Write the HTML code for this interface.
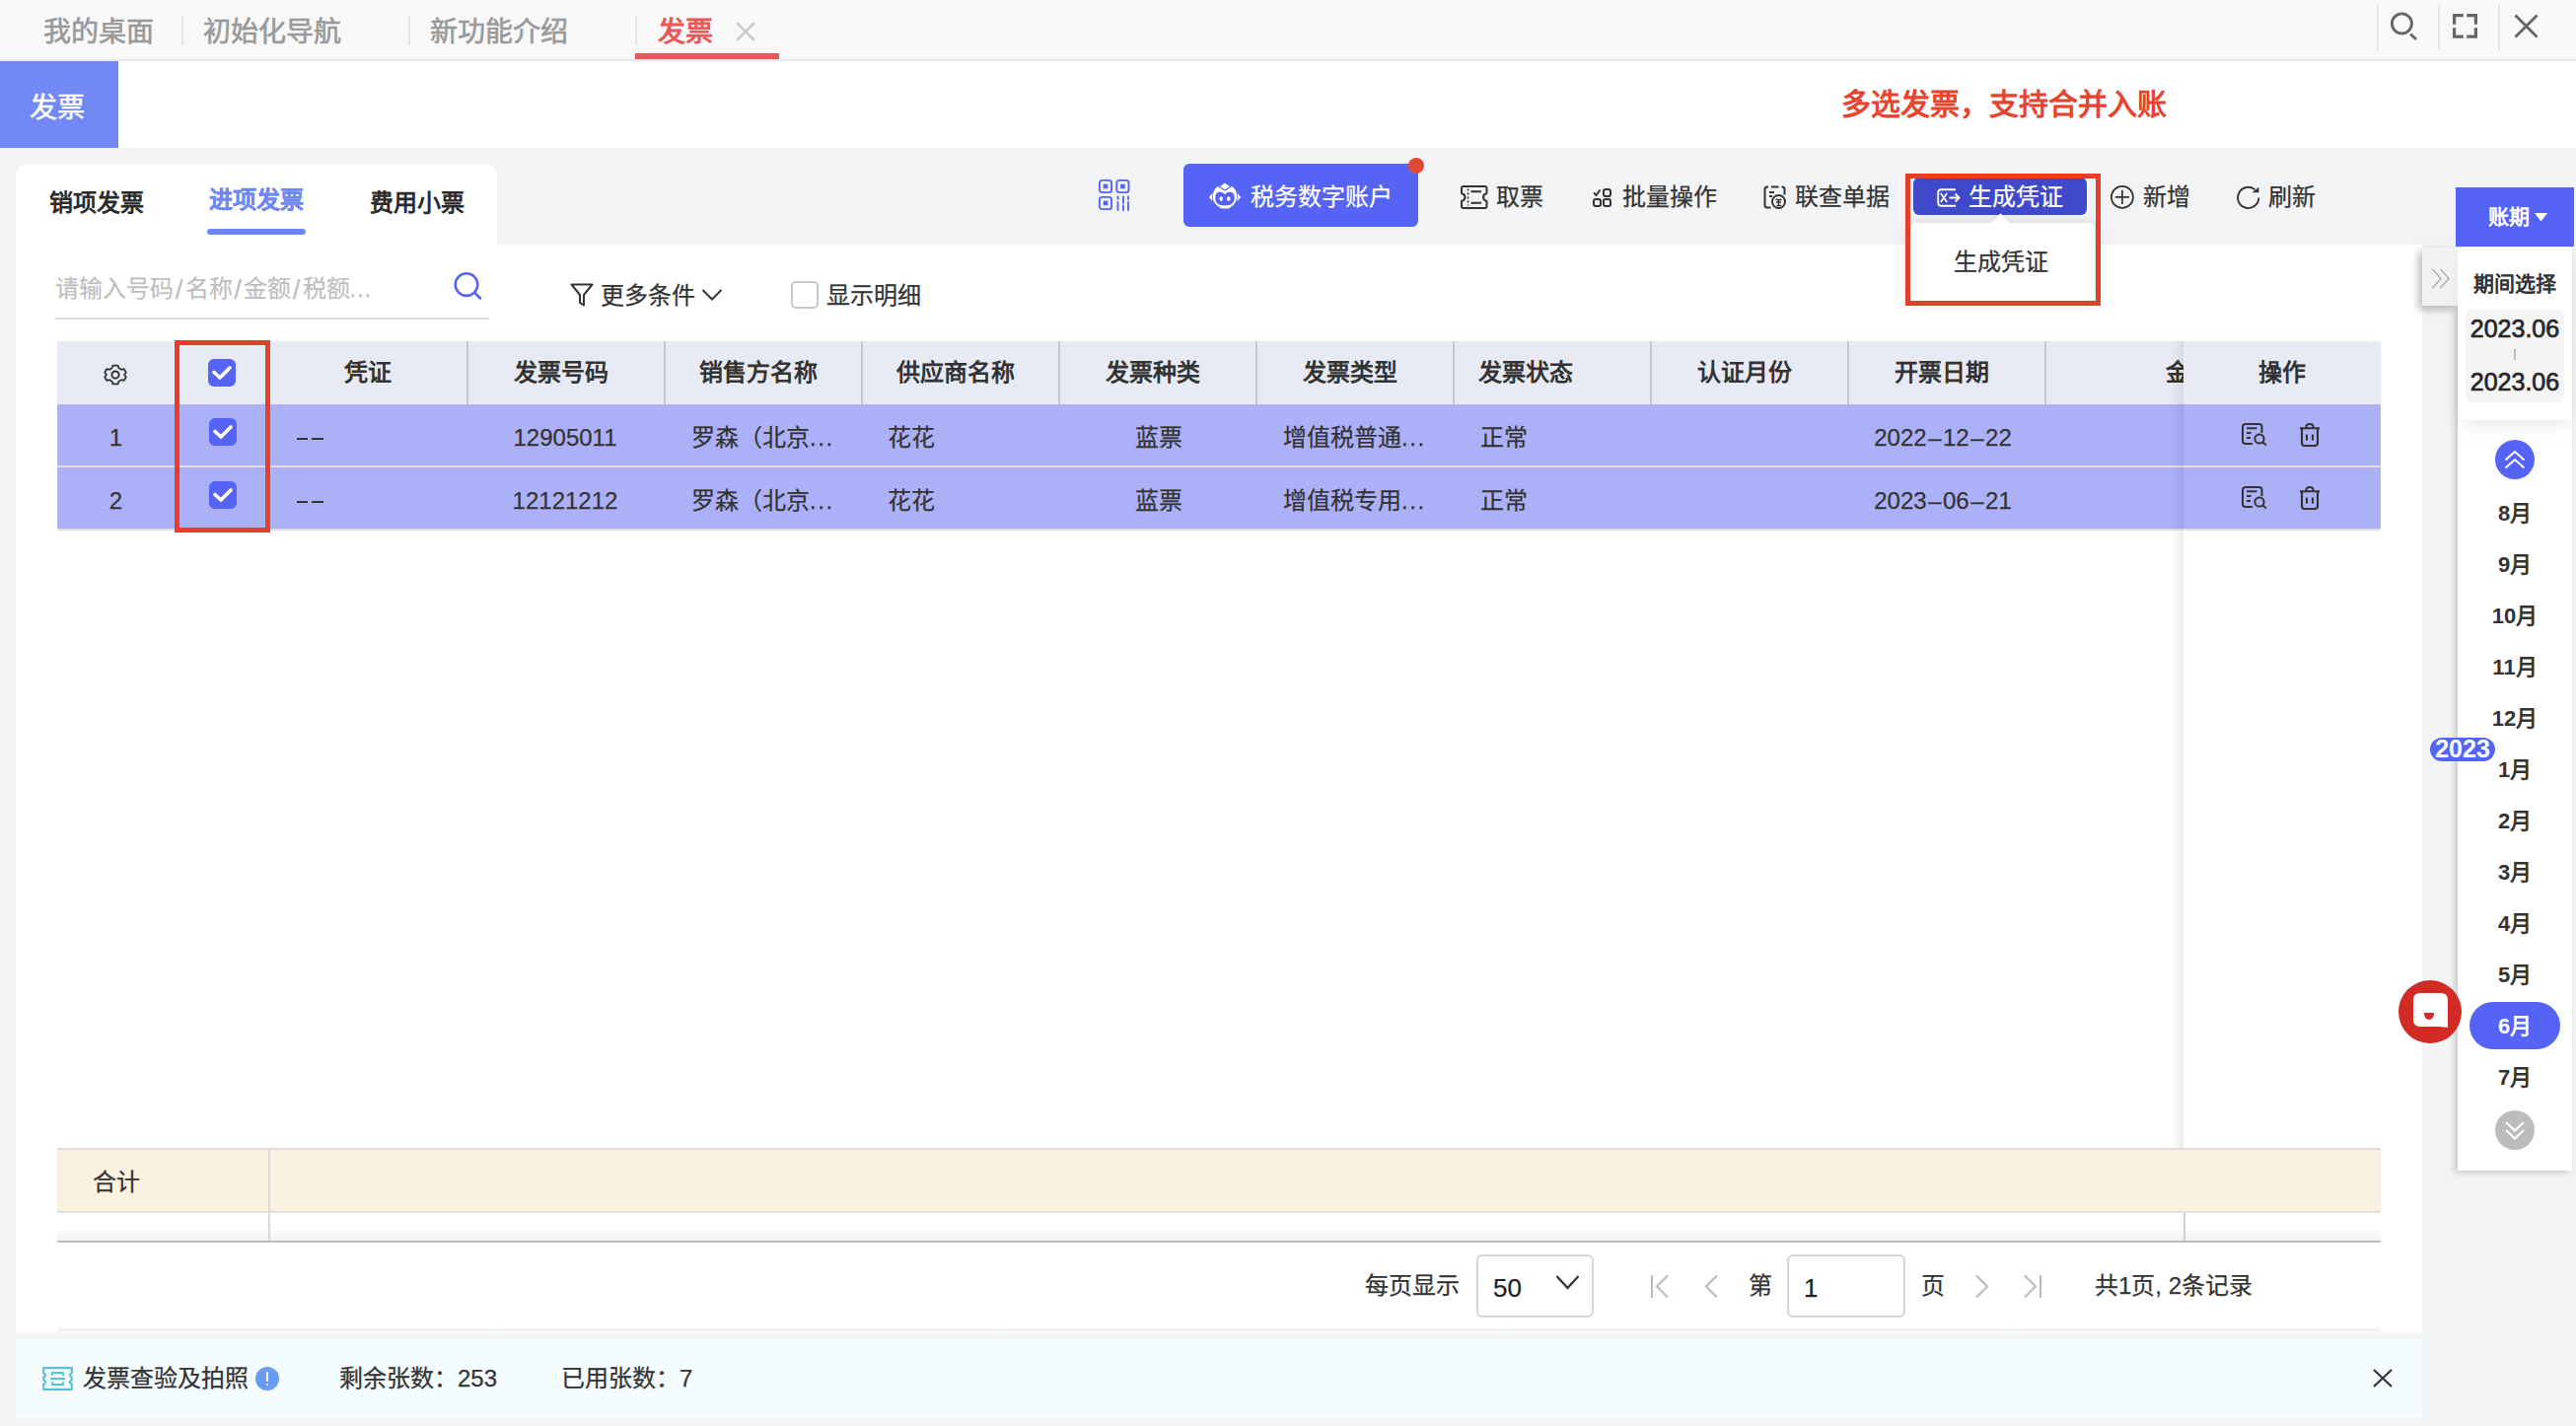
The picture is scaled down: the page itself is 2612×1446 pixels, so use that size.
<!DOCTYPE html>
<html lang="zh-CN"><head><meta charset="utf-8">
<style>
*{box-sizing:border-box;margin:0;padding:0}
html,body{width:2612px;height:1446px;overflow:hidden;background:#f2f3f5;font-family:"Liberation Sans",sans-serif;color:#333}
.a{position:absolute}
.t{position:absolute;white-space:nowrap;line-height:1;-webkit-text-stroke-width:0.25px}
svg{position:absolute;overflow:visible}
</style></head><body>

<!-- top tab bar -->
<div class="a" style="left:0;top:0;width:2612px;height:62px;background:#f8f8f8;border-bottom:2px solid #e6e8ee"></div>
<div class="t" style="left:44px;top:19px;font-size:28px;color:#999;-webkit-text-stroke:0.6px #999">我的桌面</div>
<div class="a" style="left:184px;top:16px;width:2px;height:30px;background:#e3e5ea"></div>
<div class="t" style="left:206px;top:19px;font-size:28px;color:#999;-webkit-text-stroke:0.6px #999">初始化导航</div>
<div class="a" style="left:414px;top:16px;width:2px;height:30px;background:#e3e5ea"></div>
<div class="t" style="left:436px;top:19px;font-size:28px;color:#999;-webkit-text-stroke:0.6px #999">新功能介绍</div>
<div class="a" style="left:644px;top:16px;width:2px;height:30px;background:#e3e5ea"></div>
<div class="t" style="left:667px;top:19px;font-size:28px;color:#e85858;font-weight:700;-webkit-text-stroke-width:0">发票</div>
<svg style="left:746px;top:22px" width="20" height="20" viewBox="0 0 20 20"><path d="M1 1 L19 19 M19 1 L1 19" stroke="#c8c8c8" stroke-width="2.4"/></svg>
<div class="a" style="left:644px;top:54px;width:146px;height:6px;background:#e85858"></div>

<div class="a" style="left:2410px;top:4px;width:2px;height:47px;background:#e3e5ea"></div>
<div class="a" style="left:2472px;top:4px;width:2px;height:47px;background:#e3e5ea"></div>
<div class="a" style="left:2533px;top:4px;width:2px;height:47px;background:#e3e5ea"></div>

<!-- title bar -->
<div class="a" style="left:0;top:62px;width:2612px;height:88px;background:#fff"></div>
<div class="a" style="left:0;top:62px;width:120px;height:88px;background:#7288f4"></div>
<div class="t" style="left:30px;top:96px;font-size:28px;color:#fff;-webkit-text-stroke-width:0.5px">发票</div>
<div class="t" style="left:1867px;top:91px;font-size:30px;color:#e8432e;font-weight:700;-webkit-text-stroke-width:0">多选发票，支持合并入账</div>

<!-- main card -->
<div class="a" style="left:16px;top:166px;width:488px;height:90px;background:#fff;border-radius:12px 12px 0 0"></div>
<div class="a" style="left:16px;top:248px;width:2440px;height:1102px;background:#fff"></div>


<!-- top right icons -->
<svg style="left:2420px;top:10px" width="36" height="34" viewBox="0 0 36 34"><circle cx="15.4" cy="13.9" r="10" fill="none" stroke="#666" stroke-width="2.9"/><path d="M24.2 24.5 L30 30" stroke="#666" stroke-width="2.9"/></svg>
<svg style="left:2487px;top:14px" width="26" height="26" viewBox="0 0 26 26"><path d="M1.6 10.7 V1.6 H10.8 M14.2 1.6 H23.4 V10.7 M23.4 14.2 V23.2 H14.2 M10.8 23.2 H1.6 V14.2" fill="none" stroke="#666" stroke-width="3.2"/></svg>
<svg style="left:2549px;top:14px" width="25" height="25" viewBox="0 0 25 25"><path d="M1.5 1.5 L23.5 23.5 M23.5 1.5 L1.5 23.5" stroke="#666" stroke-width="2.9"/></svg>

<!-- tabs in card -->
<div class="t" style="left:50px;top:194px;font-size:24px;color:#2b2b2b;font-weight:700;-webkit-text-stroke-width:0">销项发票</div>
<div class="t" style="left:212px;top:191px;font-size:24px;color:#6e87f5;font-weight:700;-webkit-text-stroke-width:0.15px">进项发票</div>
<div class="a" style="left:210px;top:232px;width:100px;height:6px;border-radius:3px;background:#6e87f5"></div>
<div class="t" style="left:375px;top:194px;font-size:24px;color:#2b2b2b;font-weight:700;-webkit-text-stroke-width:0">费用小票</div>

<!-- search -->
<div class="t" style="left:56px;top:280px;font-size:24px;color:#bfbfbf">请输入号码<span style="display:inline-block;width:11.5px;text-align:center;font-size:28px;vertical-align:-2px">/</span>名称<span style="display:inline-block;width:11.5px;text-align:center;font-size:28px;vertical-align:-2px">/</span>金额<span style="display:inline-block;width:11.5px;text-align:center;font-size:28px;vertical-align:-2px">/</span>税额<span style="letter-spacing:0.8px">...</span></div>
<svg style="left:460px;top:276px" width="28" height="28" viewBox="0 0 28 28"><circle cx="13" cy="12.6" r="11.3" fill="none" stroke="#5664f5" stroke-width="2.6"/><path d="M21.5 21 L27 26.5" stroke="#5664f5" stroke-width="2.6" stroke-linecap="round"/></svg>
<div class="a" style="left:56px;top:322px;width:440px;height:2px;background:#d9d9d9"></div>

<svg style="left:578px;top:287px" width="24" height="24" viewBox="0 0 24 24"><path d="M1.5 1.5 H22.5 L14 12 V22.5 L10 20 V12 Z" fill="none" stroke="#333" stroke-width="2" stroke-linejoin="round"/></svg>
<div class="t" style="left:609px;top:288px;font-size:24px;color:#333">更多条件</div>
<svg style="left:711px;top:292px" width="22" height="14" viewBox="0 0 22 14"><path d="M1.5 2 L11 11.5 L20.5 2" fill="none" stroke="#333" stroke-width="2"/></svg>
<div class="a" style="left:802px;top:285px;width:28px;height:28px;border:2px solid #c8c8c8;border-radius:5px;background:#fff"></div>
<div class="t" style="left:838px;top:288px;font-size:24px;color:#333">显示明细</div>

<!-- toolbar -->
<svg style="left:1113px;top:181px" width="34" height="33" viewBox="0 0 34 33"><g fill="none" stroke="#5664f5" stroke-width="1.9"><rect x="1.9" y="1.9" width="12.2" height="12.2" rx="2.6"/><rect x="19.3" y="1.9" width="12.2" height="12.2" rx="2.6"/><rect x="1.9" y="18.9" width="12.2" height="12.2" rx="2.6"/></g><g fill="#5664f5"><rect x="5.7" y="5.7" width="4.6" height="4.6"/><rect x="23.1" y="5.7" width="4.6" height="4.6"/><rect x="5.7" y="22.7" width="4.6" height="4.6"/></g><g stroke="#5664f5" stroke-width="1.9" stroke-linecap="round"><path d="M20.5 18.5 V21 M20.5 24 V32 M26 18.5 V25 M26 27.5 V32 M31 18.5 V21 M31 24 V32"/></g></svg>

<div class="a" style="left:1200px;top:166px;width:238px;height:64px;border-radius:6px;background:#5664f5"></div>
<div class="a" style="left:1428px;top:160px;width:16px;height:16px;border-radius:50%;background:#e04a34"></div>
<svg style="left:1225px;top:184px" width="34" height="28" viewBox="0 0 34 28"><circle cx="17" cy="15" r="12.3" fill="#fff"/><path d="M7.2 17 Q7.2 10.5 12 10.5 Q15 10.5 17 13 Q19 10.5 22 10.5 Q26.8 10.5 26.8 17 Q26.8 24.5 17 24.5 Q7.2 24.5 7.2 17 Z" fill="#5664f5"/><path d="M17 0.8 L23 5.2 L17 9 L11 5.2 Z" fill="#fff" stroke="#5664f5" stroke-width="1.2"/><ellipse cx="13.2" cy="17.6" rx="1.7" ry="2.4" fill="#fff"/><ellipse cx="20.8" cy="17.6" rx="1.7" ry="2.4" fill="#fff"/><path d="M4.2 12 L1 16 L4.2 20 Z M29.8 12 L33 16 L29.8 20 Z" fill="#fff"/><path d="M12 26.5 H22" stroke="#fff" stroke-width="1.6"/></svg>
<div class="t" style="left:1268px;top:188px;font-size:24px;color:#fff">税务数字账户</div>

<svg style="left:1481px;top:188px" width="28" height="24" viewBox="0 0 28 24"><path d="M3 1 H24.5 Q26.5 1 26.5 3 V8 Q23 9 23 12 Q23 15 26.5 16 V21 Q26.5 23 24.5 23 H3 Q1 23 1 21 V16 Q4.5 15 4.5 12 Q4.5 9 1 8 V3 Q1 1 3 1 Z" fill="none" stroke="#333" stroke-width="2" stroke-linejoin="round"/><path d="M7.5 3.5 V20.5" stroke="#333" stroke-width="1.6" stroke-dasharray="2 2"/><path d="M10.5 6.3 H21 M10.5 17.7 H21" stroke="#333" stroke-width="2"/></svg>
<div class="t" style="left:1517px;top:188px;font-size:24px;color:#333">取票</div>

<svg style="left:1615px;top:191px" width="19" height="19" viewBox="0 0 19 19"><g fill="none" stroke="#333" stroke-width="2"><path d="M1 4.5 L3.5 7 L7.5 1.5"/><rect x="11" y="1" width="7" height="7" rx="2"/><rect x="1" y="11" width="7" height="7" rx="2"/><rect x="11" y="11" width="7" height="7" rx="2"/></g></svg>
<div class="t" style="left:1645px;top:188px;font-size:24px;color:#333">批量操作</div>

<svg style="left:1788px;top:188px" width="24" height="24" viewBox="0 0 24 24"><g fill="none" stroke="#333" stroke-width="2"><path d="M5 1.5 H4 Q1.5 1.5 1.5 4 V20 Q1.5 22.5 4 22.5 H7.5"/><path d="M18.5 1.5 H19 Q21.5 1.5 21.5 4 V9.5"/><path d="M8 1.5 H15.5"/><path d="M6 7 H11 M6 11 H9"/><circle cx="15.5" cy="16.5" r="6.5"/></g><path d="M12.5 14.5 H18.5 M13 17 H18 M15.5 14.5 V20.5 M13.5 20.5 H18" stroke="#333" stroke-width="1.3" fill="none"/></svg>
<div class="t" style="left:1820px;top:188px;font-size:24px;color:#333">联查单据</div>

<div class="a" style="left:1940px;top:180px;width:176px;height:38px;border-radius:6px;background:#4049c9"></div>
<svg style="left:1964px;top:191px" width="24" height="19" viewBox="0 0 24 19"><path d="M19 1.2 H4.5 Q1.2 1.2 1.2 4.5 V14.5 Q1.2 17.8 4.5 17.8 H19" fill="none" stroke="#fff" stroke-width="1.9"/><path d="M3.8 5 L10.2 14 M10.2 5 L3.8 14" stroke="#fff" stroke-width="1.7"/><path d="M12.5 9.5 H22.5 M18.5 5.5 L22.5 9.5 L18.5 13.5" fill="none" stroke="#fff" stroke-width="1.9"/></svg>
<div class="t" style="left:1996px;top:188px;font-size:24px;color:#fff;font-weight:500">生成凭证</div>

<svg style="left:2140px;top:188px" width="24" height="24" viewBox="0 0 24 24"><circle cx="11.9" cy="11.9" r="11" fill="none" stroke="#333" stroke-width="1.7"/><path d="M11.9 4.8 V19 M4.8 11.9 H19" stroke="#333" stroke-width="1.7"/></svg>
<div class="t" style="left:2173px;top:188px;font-size:24px;color:#333">新增</div>
<svg style="left:2268px;top:189px" width="24" height="23" viewBox="0 0 24 23"><path d="M22.3 11.5 A10.6 10.6 0 1 1 18.6 3.4" fill="none" stroke="#333" stroke-width="1.9"/><path d="M15.5 6.2 H22.4 V0.8 Z" fill="#333"/></svg>
<div class="t" style="left:2300px;top:188px;font-size:24px;color:#333">刷新</div>

<!-- dropdown -->
<div class="a" style="left:1937px;top:226px;width:187px;height:79px;background:#fff;border-radius:5px;box-shadow:0 2px 14px rgba(0,0,0,0.2)"></div><div class="a" style="left:2022px;top:219px;width:13px;height:13px;background:#fff;transform:rotate(45deg);box-shadow:-2px -2px 4px rgba(0,0,0,0.06)"></div>
<div class="t" style="left:1981px;top:254px;font-size:24px;color:#333">生成凭证</div>
<div class="a" style="left:1932px;top:176px;width:198px;height:134px;border:5px solid #e53e2a"></div>


<!-- table -->
<div class="a" style="left:58px;top:346px;width:2356px;height:64px;background:#e8eaf3"></div>
<div class="a" style="left:473px;top:346px;width:2px;height:64px;background:#cbcbcf"></div><div class="a" style="left:673px;top:346px;width:2px;height:64px;background:#cbcbcf"></div><div class="a" style="left:873px;top:346px;width:2px;height:64px;background:#cbcbcf"></div><div class="a" style="left:1073px;top:346px;width:2px;height:64px;background:#cbcbcf"></div><div class="a" style="left:1273px;top:346px;width:2px;height:64px;background:#cbcbcf"></div><div class="a" style="left:1473px;top:346px;width:2px;height:64px;background:#cbcbcf"></div><div class="a" style="left:1673px;top:346px;width:2px;height:64px;background:#cbcbcf"></div><div class="a" style="left:1873px;top:346px;width:2px;height:64px;background:#cbcbcf"></div><div class="a" style="left:2073px;top:346px;width:2px;height:64px;background:#cbcbcf"></div>
<svg style="left:105px;top:368px" width="24" height="24" viewBox="0 0 24 24"><path d="M9.2 1.5 H14.8 L15.8 4.6 L18.6 6.2 L21.8 5.5 L24 9.5 L22 12 L24 14.5 L21.8 18.5 L18.6 17.8 L15.8 19.4 L14.8 22.5 H9.2 L8.2 19.4 L5.4 17.8 L2.2 18.5 L0 14.5 L2 12 L0 9.5 L2.2 5.5 L5.4 6.2 L8.2 4.6 Z" transform="translate(12 12) scale(0.9) translate(-12 -12)" fill="none" stroke="#333" stroke-width="2" stroke-linejoin="round"/><circle cx="12" cy="12" r="3.6" fill="none" stroke="#333" stroke-width="2"/></svg>
<div class="a" style="left:211px;top:364px;width:28px;height:28px;border-radius:6px;background:#5664f5"></div><svg style="left:211px;top:364px" width="28" height="28" viewBox="0 0 28 28"><path d="M6 13.5 L12 19 L22 9" fill="none" stroke="#fff" stroke-width="3.6" stroke-linecap="round" stroke-linejoin="round"/></svg>
<div class="t" style="left:273px;width:200px;text-align:center;top:366px;font-size:24px;font-weight:700;-webkit-text-stroke-width:0;color:#333">凭证</div>
<div class="t" style="left:469px;width:200px;text-align:center;top:366px;font-size:24px;font-weight:700;-webkit-text-stroke-width:0;color:#333">发票号码</div>
<div class="t" style="left:669px;width:200px;text-align:center;top:366px;font-size:24px;font-weight:700;-webkit-text-stroke-width:0;color:#333">销售方名称</div>
<div class="t" style="left:869px;width:200px;text-align:center;top:366px;font-size:24px;font-weight:700;-webkit-text-stroke-width:0;color:#333">供应商名称</div>
<div class="t" style="left:1069px;width:200px;text-align:center;top:366px;font-size:24px;font-weight:700;-webkit-text-stroke-width:0;color:#333">发票种类</div>
<div class="t" style="left:1269px;width:200px;text-align:center;top:366px;font-size:24px;font-weight:700;-webkit-text-stroke-width:0;color:#333">发票类型</div>
<div class="t" style="left:1499px;top:366px;font-size:24px;font-weight:700;-webkit-text-stroke-width:0;color:#333">发票状态</div>
<div class="t" style="left:1669px;width:200px;text-align:center;top:366px;font-size:24px;font-weight:700;-webkit-text-stroke-width:0;color:#333">认证月份</div>
<div class="t" style="left:1869px;width:200px;text-align:center;top:366px;font-size:24px;font-weight:700;-webkit-text-stroke-width:0;color:#333">开票日期</div>
<div class="t" style="left:2196px;top:366px;font-size:24px;font-weight:700;-webkit-text-stroke-width:0;color:#333">金</div>
<div class="a" style="left:58px;top:410px;width:2356px;height:62px;background:#abb0f7"></div><div class="a" style="left:58px;top:472px;width:2356px;height:2px;background:#dcdde6"></div><div class="t" style="left:58px;width:119px;text-align:center;top:432px;font-size:24px;color:#333">1</div><div class="a" style="left:212px;top:424px;width:28px;height:28px;border-radius:6px;background:#5664f5"></div><svg style="left:212px;top:424px" width="28" height="28" viewBox="0 0 28 28"><path d="M6 13.5 L12 19 L22 9" fill="none" stroke="#fff" stroke-width="3.6" stroke-linecap="round" stroke-linejoin="round"/></svg><div class="a" style="left:301px;top:444px;width:11px;height:2px;background:#333"></div><div class="a" style="left:316px;top:444px;width:12px;height:2px;background:#333"></div><div class="t" style="left:473px;width:200px;text-align:center;top:432px;font-size:24px;color:#333">12905011</div><div class="t" style="left:701px;top:432px;font-size:24px;color:#333">罗森（北京<span style="letter-spacing:1.6px">...</span></div><div class="t" style="left:900px;top:432px;font-size:24px;color:#333">花花</div><div class="t" style="left:1075px;width:200px;text-align:center;top:432px;font-size:24px;color:#333">蓝票</div><div class="t" style="left:1301px;top:432px;font-size:24px;color:#333">增值税普通<span style="letter-spacing:1.6px">...</span></div><div class="t" style="left:1501px;top:432px;font-size:24px;color:#333">正常</div><div class="t" style="left:1870px;width:200px;text-align:center;top:432px;font-size:24px;color:#333">2022<span style="margin:0 1.5px">–</span>12<span style="margin:0 1.5px">–</span>22</div><svg style="left:2273px;top:429px" width="26" height="23" viewBox="0 0 26 23"><path d="M11 21 H4 Q1 21 1 18 V4 Q1 1 4 1 H17.5 Q20.5 1 20.5 4 V10" fill="none" stroke="#333" stroke-width="2"/><path d="M5 5.2 H15.5 M5 10 H9.5 M5 15 H9" stroke="#333" stroke-width="2"/><circle cx="18" cy="16" r="4.6" fill="none" stroke="#333" stroke-width="2"/><path d="M21.3 19.3 L25 22.5" stroke="#333" stroke-width="2"/></svg><svg style="left:2332px;top:429px" width="20" height="24" viewBox="0 0 20 24"><path d="M6.5 5 V3.5 Q6.5 1 10 1 Q13.5 1 13.5 3.5 V5 M0 5.2 H20 M2 5.2 V20 Q2 23 5 23 H15 Q18 23 18 20 V5.2 M7 11.5 V17.5 M13 11.5 V17.5" fill="none" stroke="#333" stroke-width="2.1"/></svg>
<div class="a" style="left:58px;top:474px;width:2356px;height:62px;background:#abb0f7"></div><div class="a" style="left:58px;top:536px;width:2356px;height:2px;background:#dcdde6"></div><div class="t" style="left:58px;width:119px;text-align:center;top:496px;font-size:24px;color:#333">2</div><div class="a" style="left:212px;top:488px;width:28px;height:28px;border-radius:6px;background:#5664f5"></div><svg style="left:212px;top:488px" width="28" height="28" viewBox="0 0 28 28"><path d="M6 13.5 L12 19 L22 9" fill="none" stroke="#fff" stroke-width="3.6" stroke-linecap="round" stroke-linejoin="round"/></svg><div class="a" style="left:301px;top:508px;width:11px;height:2px;background:#333"></div><div class="a" style="left:316px;top:508px;width:12px;height:2px;background:#333"></div><div class="t" style="left:473px;width:200px;text-align:center;top:496px;font-size:24px;color:#333">12121212</div><div class="t" style="left:701px;top:496px;font-size:24px;color:#333">罗森（北京<span style="letter-spacing:1.6px">...</span></div><div class="t" style="left:900px;top:496px;font-size:24px;color:#333">花花</div><div class="t" style="left:1075px;width:200px;text-align:center;top:496px;font-size:24px;color:#333">蓝票</div><div class="t" style="left:1301px;top:496px;font-size:24px;color:#333">增值税专用<span style="letter-spacing:1.6px">...</span></div><div class="t" style="left:1501px;top:496px;font-size:24px;color:#333">正常</div><div class="t" style="left:1870px;width:200px;text-align:center;top:496px;font-size:24px;color:#333">2023<span style="margin:0 1.5px">–</span>06<span style="margin:0 1.5px">–</span>21</div><svg style="left:2273px;top:493px" width="26" height="23" viewBox="0 0 26 23"><path d="M11 21 H4 Q1 21 1 18 V4 Q1 1 4 1 H17.5 Q20.5 1 20.5 4 V10" fill="none" stroke="#333" stroke-width="2"/><path d="M5 5.2 H15.5 M5 10 H9.5 M5 15 H9" stroke="#333" stroke-width="2"/><circle cx="18" cy="16" r="4.6" fill="none" stroke="#333" stroke-width="2"/><path d="M21.3 19.3 L25 22.5" stroke="#333" stroke-width="2"/></svg><svg style="left:2332px;top:493px" width="20" height="24" viewBox="0 0 20 24"><path d="M6.5 5 V3.5 Q6.5 1 10 1 Q13.5 1 13.5 3.5 V5 M0 5.2 H20 M2 5.2 V20 Q2 23 5 23 H15 Q18 23 18 20 V5.2 M7 11.5 V17.5 M13 11.5 V17.5" fill="none" stroke="#333" stroke-width="2.1"/></svg>


<div class="a" style="left:177px;top:345px;width:97px;height:195px;border:5px solid #e53e2a"></div>
<!-- fixed column -->
<div class="a" style="left:2214px;top:346px;width:200px;height:64px;background:#e8eaf3"></div>
<div class="t" style="left:2214px;width:200px;text-align:center;top:366px;font-size:24px;font-weight:700;-webkit-text-stroke-width:0;color:#333">操作</div>
<div class="a" style="left:2202px;top:346px;width:12px;height:818px;background:linear-gradient(to right,rgba(0,0,0,0),rgba(0,0,0,0.07))"></div>


<!-- table footer -->
<div class="a" style="left:58px;top:1164px;width:2356px;height:2px;background:#dcdcdc"></div>
<div class="a" style="left:58px;top:1166px;width:2356px;height:62px;background:#faf1e0"></div>
<div class="a" style="left:58px;top:1228px;width:2356px;height:2px;background:#e0e0e0"></div>
<div class="a" style="left:58px;top:1244px;width:2356px;height:14px;background:linear-gradient(rgba(0,0,0,0),rgba(0,0,0,0.05))"></div><div class="a" style="left:58px;top:1258px;width:2356px;height:2px;background:#bdbdbd"></div>
<div class="a" style="left:272px;top:1166px;width:2px;height:92px;background:#dadada"></div>
<div class="a" style="left:2214px;top:1230px;width:2px;height:28px;background:#d0d0d0"></div>
<div class="t" style="left:58px;width:119px;text-align:center;top:1187px;font-size:24px;color:#333">合计</div>

<!-- pagination -->
<div class="t" style="left:1384px;top:1292px;font-size:24px;color:#333">每页显示</div>
<div class="a" style="left:1497px;top:1272px;width:119px;height:64px;border:2px solid #d6d6d6;border-radius:6px;background:#fff"></div>
<div class="t" style="left:1514px;top:1293px;font-size:26px;color:#222">50</div>
<svg style="left:1577px;top:1292px" width="25" height="17" viewBox="0 0 25 17"><path d="M1.5 2 L12.5 14 L23.5 2" fill="none" stroke="#333" stroke-width="2.2"/></svg>
<svg style="left:1673px;top:1292px" width="20" height="25" viewBox="0 0 20 25"><path d="M2 1 V24 M18 1.5 L7 12.5 L18 23.5" fill="none" stroke="#bbb" stroke-width="2.2"/></svg>
<svg style="left:1727px;top:1292px" width="16" height="25" viewBox="0 0 16 25"><path d="M14 1.5 L3 12.5 L14 23.5" fill="none" stroke="#bbb" stroke-width="2.2"/></svg>
<div class="t" style="left:1773px;top:1292px;font-size:24px;color:#333">第</div>
<div class="a" style="left:1812px;top:1272px;width:120px;height:64px;border:2px solid #d6d6d6;border-radius:6px;background:#fff"></div>
<div class="t" style="left:1829px;top:1293px;font-size:26px;color:#222">1</div>
<div class="t" style="left:1948px;top:1292px;font-size:24px;color:#333">页</div>
<svg style="left:2002px;top:1292px" width="16" height="25" viewBox="0 0 16 25"><path d="M2 1.5 L13 12.5 L2 23.5" fill="none" stroke="#bbb" stroke-width="2.2"/></svg>
<svg style="left:2051px;top:1292px" width="20" height="25" viewBox="0 0 20 25"><path d="M18 1 V24 M2 1.5 L13 12.5 L2 23.5" fill="none" stroke="#bbb" stroke-width="2.2"/></svg>
<div class="t" style="left:2124px;top:1292px;font-size:24px;color:#333">共1页, 2条记录</div>

<!-- bottom bar -->
<div class="a" style="left:16px;top:1349px;width:2440px;height:8px;background:linear-gradient(#fbfbfb,#f1f2f3)"></div><div class="a" style="left:58px;top:1347px;width:2356px;height:3px;background:#f3f3f3"></div>
<div class="a" style="left:16px;top:1357px;width:2440px;height:81px;background:#f4fcfe"></div>
<svg style="left:43px;top:1386px" width="31" height="24" viewBox="0 0 31 24"><path d="M1.2 1.2 H29.8 V6 L27.8 8.5 L29.8 11 V13 L27.8 15.5 L29.8 18 V22.8 H1.2 V18 L3.2 15.5 L1.2 13 V11 L3.2 8.5 L1.2 6 Z" fill="none" stroke="#5bbfd6" stroke-width="2.2" stroke-linejoin="round"/><path d="M10 9 V6 H21 V9 M10 15 V18 H21 V15 M8 12 H23" fill="none" stroke="#5bbfd6" stroke-width="1.8"/></svg>
<div class="t" style="left:84px;top:1386px;font-size:24px;color:#333">发票查验及拍照</div>
<div class="a" style="left:259px;top:1386px;width:24px;height:24px;border-radius:50%;background:#6a9bf0"></div>
<div class="a" style="left:270.2px;top:1391px;width:2px;height:10px;background:#fff;border-radius:1px"></div>
<div class="a" style="left:270.2px;top:1403px;width:2px;height:2px;background:#fff;border-radius:1px"></div>
<div class="t" style="left:344px;top:1386px;font-size:24px;color:#333">剩余张数：253</div>
<div class="t" style="left:569px;top:1386px;font-size:24px;color:#333">已用张数：7</div>
<svg style="left:2406px;top:1388px" width="20" height="19" viewBox="0 0 20 19"><path d="M1 1 L19 18 M19 1 L1 18" stroke="#333" stroke-width="2.2"/></svg>

<!-- date panel -->
<div class="a" style="left:2490px;top:190px;width:120px;height:60px;background:#5664f5"></div>
<div class="t" style="left:2523px;top:209px;font-size:21px;color:#fff;font-weight:700;-webkit-text-stroke-width:0">账期</div>
<svg style="left:2570px;top:216px" width="13" height="9" viewBox="0 0 13 9"><path d="M0 0 H13 L6.5 8.5 Z" fill="#fff"/></svg>
<div class="a" style="left:2492px;top:251px;width:116px;height:936px;background:#fff;box-shadow:-3px 2px 6px rgba(0,0,0,0.18)"></div>
<div class="a" style="left:2456px;top:251px;width:36px;height:59px;background:#f2f2f2;box-shadow:-4px 4px 8px rgba(0,0,0,0.25)"></div>
<svg style="left:2465px;top:272px" width="20" height="21" viewBox="0 0 20 21"><path d="M1.5 1 L10 10.5 L1.5 20 M9.5 1 L18 10.5 L9.5 20" fill="none" stroke="#b5b5b5" stroke-width="1.8"/></svg>
<div class="a" style="left:2492px;top:251px;width:116px;height:175px;background:#fff;box-shadow:0 8px 16px -4px rgba(0,0,0,0.1)"></div>
<div class="t" style="left:2492px;width:116px;text-align:center;top:277px;font-size:21px;font-weight:700;-webkit-text-stroke-width:0;color:#333">期间选择</div>
<div class="a" style="left:2500px;top:314px;width:100px;height:94px;border-radius:6px;background:#f4f4f4"></div>
<div class="t" style="left:2492px;width:116px;text-align:center;top:321px;font-size:25px;color:#262626;-webkit-text-stroke-width:0.7px">2023.06</div>
<div class="a" style="left:2549px;top:354px;width:2px;height:11px;background:#bbb"></div>
<div class="t" style="left:2492px;width:116px;text-align:center;top:375px;font-size:25px;color:#262626;-webkit-text-stroke-width:0.7px">2023.06</div>
<div class="a" style="left:2530px;top:446px;width:40px;height:40px;border-radius:50%;background:#5664f5"></div>
<svg style="left:2530px;top:446px" width="40" height="40" viewBox="0 0 40 40"><path d="M10.5 20.5 L20 12 L29.5 20.5 M10.5 28.5 L20 20 L29.5 28.5" fill="none" stroke="#fff" stroke-width="2"/></svg>
<div class="t" style="left:2492px;width:116px;text-align:center;top:510px;font-size:22px;font-weight:700;-webkit-text-stroke-width:0;color:#333">8月</div><div class="t" style="left:2492px;width:116px;text-align:center;top:562px;font-size:22px;font-weight:700;-webkit-text-stroke-width:0;color:#333">9月</div><div class="t" style="left:2492px;width:116px;text-align:center;top:614px;font-size:22px;font-weight:700;-webkit-text-stroke-width:0;color:#333">10月</div><div class="t" style="left:2492px;width:116px;text-align:center;top:666px;font-size:22px;font-weight:700;-webkit-text-stroke-width:0;color:#333">11月</div><div class="t" style="left:2492px;width:116px;text-align:center;top:718px;font-size:22px;font-weight:700;-webkit-text-stroke-width:0;color:#333">12月</div><div class="t" style="left:2492px;width:116px;text-align:center;top:770px;font-size:22px;font-weight:700;-webkit-text-stroke-width:0;color:#333">1月</div><div class="t" style="left:2492px;width:116px;text-align:center;top:822px;font-size:22px;font-weight:700;-webkit-text-stroke-width:0;color:#333">2月</div><div class="t" style="left:2492px;width:116px;text-align:center;top:874px;font-size:22px;font-weight:700;-webkit-text-stroke-width:0;color:#333">3月</div><div class="t" style="left:2492px;width:116px;text-align:center;top:926px;font-size:22px;font-weight:700;-webkit-text-stroke-width:0;color:#333">4月</div><div class="t" style="left:2492px;width:116px;text-align:center;top:978px;font-size:22px;font-weight:700;-webkit-text-stroke-width:0;color:#333">5月</div><div class="a" style="left:2504px;top:1016px;width:92px;height:48px;border-radius:24px;background:#5664f5"></div><div class="t" style="left:2492px;width:116px;text-align:center;top:1030px;font-size:22px;font-weight:700;-webkit-text-stroke-width:0;color:#fff">6月</div><div class="t" style="left:2492px;width:116px;text-align:center;top:1082px;font-size:22px;font-weight:700;-webkit-text-stroke-width:0;color:#333">7月</div>
<div class="a" style="left:2530px;top:1126px;width:40px;height:40px;border-radius:50%;background:#bcbcbc"></div>
<svg style="left:2530px;top:1126px" width="40" height="40" viewBox="0 0 40 40"><path d="M11 12 L20 20.5 L29 12 M11 20 L20 28.5 L29 20" fill="none" stroke="#fff" stroke-width="2.2"/></svg>
<div class="a" style="left:2464px;top:748px;width:66px;height:24px;border-radius:12px;background:#5664f5"></div>
<div class="t" style="left:2464px;width:66px;text-align:center;top:747px;font-size:25px;font-weight:700;-webkit-text-stroke-width:0;color:#fff">2023</div>

<!-- chat button -->
<div class="a" style="left:2432px;top:994px;width:64px;height:64px;border-radius:50%;background:#d22b26"></div>
<svg style="left:2447px;top:1007px" width="36" height="36" viewBox="0 0 36 36"><path d="M7 0 H28 Q35 0 35 7 V35 L27 34 H7 Q0 34 0 27 V7 Q0 0 7 0 Z" fill="#fff"/><path d="M11 20 H21 Q21 27 16 27 Q11 27 11 20 Z" fill="#d22b26"/></svg>

</body></html>
